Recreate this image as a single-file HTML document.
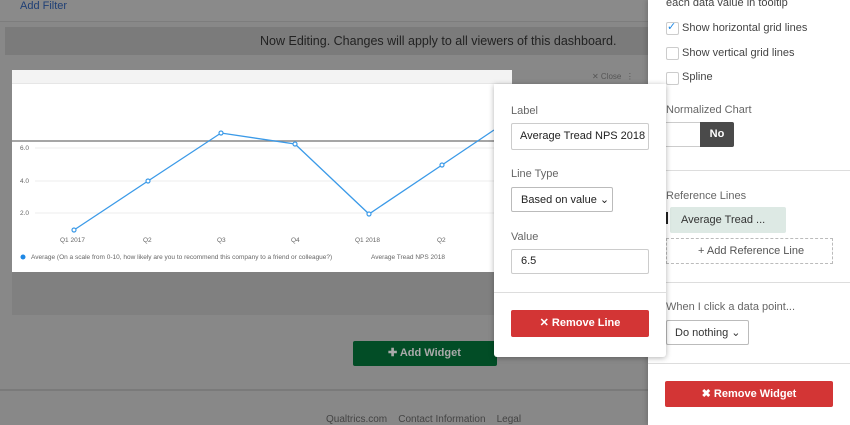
<!DOCTYPE html>
<html><head><style>
*{margin:0;padding:0;box-sizing:border-box}
body{width:850px;height:425px;overflow:hidden;background:#888;font-family:"Liberation Sans",sans-serif;position:relative}
.a{position:absolute}
.t{position:absolute;white-space:nowrap}
.cb{position:absolute;width:13px;height:13px;border:1px solid #ccc;border-radius:2px;background:#fff}
</style></head><body>
<div class="a" style="left:0;top:0;width:850px;height:22px;background:#8a8a8a;border-bottom:1px solid #7d7d7d"></div>
<div class="t" style="left:20px;top:0;font-size:11px;color:#1f3f75">Add Filter</div>
<div class="a" style="left:5px;top:27px;width:645px;height:28px;background:#7b7b7b"></div>
<div class="t" style="left:260px;top:34px;font-size:12.5px;color:#222">Now Editing. Changes will apply to all viewers of this dashboard.</div>
<div class="a" style="left:12px;top:270px;width:500px;height:45px;background:#808080"></div>
<div class="a" style="left:12px;top:70px;width:500px;height:202px;background:#fff"></div>
<div class="a" style="left:12px;top:70px;width:500px;height:14px;background:#f3f3f3;border-bottom:1px solid #e6e6e6"></div>
<div class="t" style="left:592px;top:72px;font-size:8px;color:#555">✕ Close &nbsp;⋮</div>
<svg class="a" style="left:0;top:0" width="850" height="425">
<line x1="12" y1="141" x2="494" y2="141" stroke="#888" stroke-width="1.5"/>
<g stroke="#eee"><line x1="35" y1="148" x2="494" y2="148"/><line x1="35" y1="181" x2="494" y2="181"/><line x1="35" y1="213" x2="494" y2="213"/></g>
<g font-size="6.5" fill="#666" font-family="Liberation Sans">
<text x="20" y="150">6.0</text><text x="20" y="183">4.0</text><text x="20" y="215">2.0</text>
<text x="60" y="242">Q1 2017</text><text x="143" y="242">Q2</text><text x="217" y="242">Q3</text><text x="291" y="242">Q4</text><text x="355" y="242">Q1 2018</text><text x="437" y="242">Q2</text>
<text x="31" y="259">Average (On a scale from 0-10, how likely are you to recommend this company to a friend or colleague?)</text>
<text x="371" y="259">Average Tread NPS 2018</text></g>
<circle cx="23" cy="257" r="2.5" fill="#1e88e5"/>
<polyline points="74,230 148,181 221,133 295,144 369,214 442,165 494,130" fill="none" stroke="#3b9ae8" stroke-width="1.3"/>
<g fill="#fff" stroke="#3b9ae8" stroke-width="1.2"><circle cx="74" cy="230" r="2"/><circle cx="148" cy="181" r="2"/><circle cx="221" cy="133" r="2"/><circle cx="295" cy="144" r="2"/><circle cx="369" cy="214" r="2"/><circle cx="442" cy="165" r="2"/></g>
</svg>
<div class="a" style="left:353px;top:341px;width:144px;height:25px;background:#024d26;border-radius:2px"></div>
<div class="t" style="left:388px;top:346px;font-size:11px;color:#aaa;font-weight:bold">✚ Add Widget</div>
<div class="a" style="left:0;top:389px;width:650px;height:2px;background:#7a7a7a"></div>
<div class="t" style="left:326px;top:414px;font-size:10px;color:#444">Qualtrics.com &nbsp;&nbsp; Contact Information &nbsp;&nbsp; Legal</div>

<div class="a" style="left:648px;top:0;width:202px;height:425px;background:#fff;box-shadow:-2px 0 4px rgba(0,0,0,.15)"></div>
<div class="t" style="left:666px;top:-3px;font-size:11px;color:#444">each data value in tooltip</div>
<div class="cb" style="left:666px;top:22px"></div><div class="t" style="left:667px;top:20px;font-size:11px;color:#1e88e5">✓</div>
<div class="t" style="left:682px;top:22px;font-size:11px;color:#444">Show horizontal grid lines</div>
<div class="cb" style="left:666px;top:47px"></div><div class="t" style="left:682px;top:47px;font-size:11px;color:#444">Show vertical grid lines</div>
<div class="cb" style="left:666px;top:72px"></div><div class="t" style="left:682px;top:71px;font-size:11px;color:#444">Spline</div>
<div class="t" style="left:666px;top:104px;font-size:11px;color:#666">Normalized Chart</div>
<div class="a" style="left:664px;top:122px;width:70px;height:25px;border:1px solid #ccc;border-radius:2px"></div>
<div class="a" style="left:700px;top:122px;width:34px;height:25px;background:#4a4a4a;border-radius:0 2px 2px 0;color:#fff;font-size:11px;font-weight:bold;text-align:center;line-height:25px">No</div>
<div class="a" style="left:648px;top:170px;width:202px;height:1px;background:#ddd"></div>
<div class="t" style="left:666px;top:190px;font-size:11px;color:#666">Reference Lines</div>
<div class="a" style="left:666px;top:212px;width:2px;height:12px;background:#222"></div>
<div class="a" style="left:670px;top:207px;width:116px;height:26px;background:#dde9e4;border-radius:2px"></div>
<div class="t" style="left:681px;top:214px;font-size:11px;color:#333">Average Tread ...</div>
<div class="a" style="left:666px;top:238px;width:167px;height:26px;border:1px dashed #bbb"></div>
<div class="t" style="left:698px;top:245px;font-size:11px;color:#555">+ Add Reference Line</div>
<div class="a" style="left:648px;top:282px;width:202px;height:1px;background:#ddd"></div>
<div class="t" style="left:666px;top:301px;font-size:11px;color:#666">When I click a data point...</div>
<div class="a" style="left:666px;top:320px;width:83px;height:25px;border:1px solid #bbb;border-radius:2px"></div>
<div class="t" style="left:675px;top:326px;font-size:11px;color:#333">Do nothing ⌄</div>
<div class="a" style="left:648px;top:363px;width:202px;height:1px;background:#ddd"></div>
<div class="a" style="left:665px;top:381px;width:168px;height:26px;background:#d33535;border-radius:2px;color:#fff;font-size:11px;font-weight:bold;text-align:center;line-height:26px">✖ Remove Widget</div>

<div class="a" style="left:494px;top:84px;width:172px;height:273px;background:#fff;box-shadow:0 1px 6px rgba(0,0,0,.3);border-radius:0 0 3px 3px"></div>
<div class="t" style="left:511px;top:105px;font-size:11px;color:#666">Label</div>
<div class="a" style="left:511px;top:123px;width:138px;height:27px;border:1px solid #ccc;border-radius:2px"></div>
<div class="t" style="left:520px;top:130px;font-size:11px;color:#222">Average Tread NPS 2018</div>
<div class="t" style="left:511px;top:168px;font-size:11px;color:#666">Line Type</div>
<div class="a" style="left:511px;top:187px;width:102px;height:25px;border:1px solid #bbb;border-radius:2px"></div>
<div class="t" style="left:521px;top:193px;font-size:11px;color:#222">Based on value ⌄</div>
<div class="t" style="left:511px;top:231px;font-size:11px;color:#666">Value</div>
<div class="a" style="left:511px;top:249px;width:138px;height:25px;border:1px solid #ccc;border-radius:2px"></div>
<div class="t" style="left:521px;top:255px;font-size:11px;color:#222">6.5</div>
<div class="a" style="left:494px;top:292px;width:172px;height:1px;background:#ddd"></div>
<div class="a" style="left:511px;top:310px;width:138px;height:27px;background:#d33535;border-radius:2px;color:#fff;font-size:11px;font-weight:bold;text-align:center;line-height:27px">✕ Remove Line</div>
</body></html>
